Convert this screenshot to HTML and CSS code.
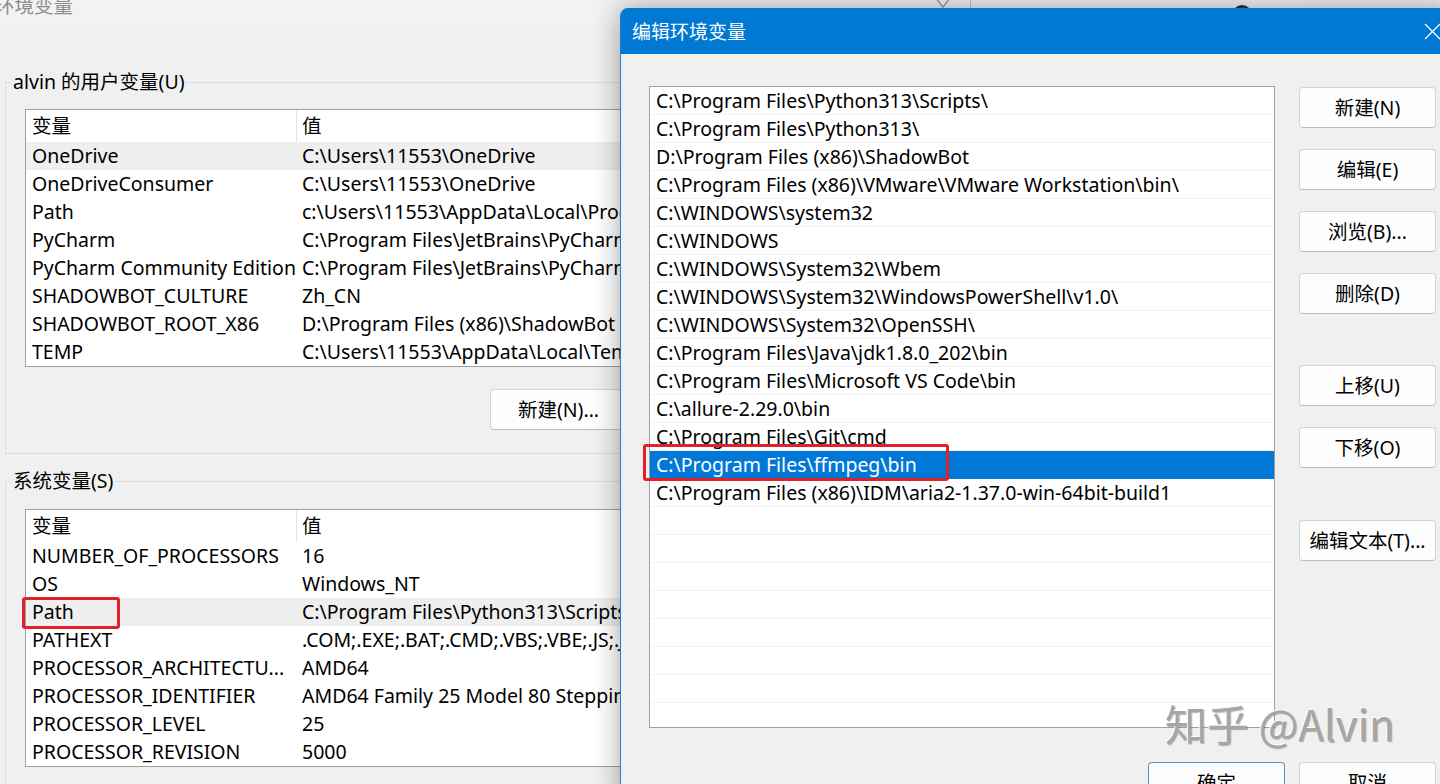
FILE: index.html
```html
<!DOCTYPE html>
<html lang="zh-CN">
<head>
<meta charset="utf-8">
<title>编辑环境变量</title>
<link rel="stylesheet" href="styles.css">
</head>
<body>
<div class="screen">
  <div class="bgwin">
    <div class="bgtitle">
      <span class="bgtitle-text">环境变量</span>
      <svg class="chev" width="18" height="10" viewBox="0 0 18 10"><polyline points="1,-3 9,7 17,-3" fill="none" stroke="#8a8a8a" stroke-width="1.2"/></svg>
      <span class="vline"></span>
      <span class="dot"></span>
    </div>

    <fieldset class="group g1">
      <legend>alvin 的用户变量(U)</legend>
      <div class="table">
        <div class="thead"><div class="c1">变量</div><div class="c2">值</div></div>
        <div class="row sel"><div class="c1">OneDrive</div><div class="c2">C:\Users\11553\OneDrive</div></div>
        <div class="row"><div class="c1">OneDriveConsumer</div><div class="c2">C:\Users\11553\OneDrive</div></div>
        <div class="row"><div class="c1">Path</div><div class="c2">c:\Users\11553\AppData\Local\Programs\Microsoft VS Code\bin</div></div>
        <div class="row"><div class="c1">PyCharm</div><div class="c2">C:\Program Files\JetBrains\PyCharm 2024.1\bin;</div></div>
        <div class="row"><div class="c1">PyCharm Community Edition</div><div class="c2">C:\Program Files\JetBrains\PyCharm Community Edition\bin;</div></div>
        <div class="row"><div class="c1">SHADOWBOT_CULTURE</div><div class="c2">Zh_CN</div></div>
        <div class="row"><div class="c1">SHADOWBOT_ROOT_X86</div><div class="c2">D:\Program Files (x86)\ShadowBot</div></div>
        <div class="row"><div class="c1">TEMP</div><div class="c2">C:\Users\11553\AppData\Local\Temp</div></div>
      </div>
      <div class="btnrow"><button class="btn">新建(N)...</button></div>
    </fieldset>

    <fieldset class="group g2">
      <legend>系统变量(S)</legend>
      <div class="table">
        <div class="thead"><div class="c1">变量</div><div class="c2">值</div></div>
        <div class="row"><div class="c1">NUMBER_OF_PROCESSORS</div><div class="c2">16</div></div>
        <div class="row"><div class="c1">OS</div><div class="c2">Windows_NT</div></div>
        <div class="row sel hl"><div class="c1">Path</div><div class="c2">C:\Program Files\Python313\Scripts\;C:\Program Files\Python313\</div><span class="mark mark-path"></span></div>
        <div class="row"><div class="c1">PATHEXT</div><div class="c2">.COM;.EXE;.BAT;.CMD;.VBS;.VBE;.JS;.JSE;.WSF;.WSH;.MSC</div></div>
        <div class="row"><div class="c1">PROCESSOR_ARCHITECTU...</div><div class="c2">AMD64</div></div>
        <div class="row"><div class="c1">PROCESSOR_IDENTIFIER</div><div class="c2">AMD64 Family 25 Model 80 Stepping 0, AuthenticAMD</div></div>
        <div class="row"><div class="c1">PROCESSOR_LEVEL</div><div class="c2">25</div></div>
        <div class="row"><div class="c1">PROCESSOR_REVISION</div><div class="c2">5000</div></div>
      </div>
    </fieldset>
  </div>

  <div class="dialog">
    <div class="dtitle">
      <span>编辑环境变量</span>
      <span class="close"><svg width="17" height="17" viewBox="0 0 17 17"><path d="M1 1 L16 16 M16 1 L1 16" stroke="#fff" stroke-width="1.3" fill="none"/></svg></span>
    </div>
    <div class="dbody">
      <div class="listwrap">
        <div class="list">
          <div class="item">C:\Program Files\Python313\Scripts\</div>
          <div class="item">C:\Program Files\Python313\</div>
          <div class="item">D:\Program Files (x86)\ShadowBot</div>
          <div class="item">C:\Program Files (x86)\VMware\VMware Workstation\bin\</div>
          <div class="item">C:\WINDOWS\system32</div>
          <div class="item">C:\WINDOWS</div>
          <div class="item">C:\WINDOWS\System32\Wbem</div>
          <div class="item">C:\WINDOWS\System32\WindowsPowerShell\v1.0\</div>
          <div class="item">C:\WINDOWS\System32\OpenSSH\</div>
          <div class="item">C:\Program Files\Java\jdk1.8.0_202\bin</div>
          <div class="item">C:\Program Files\Microsoft VS Code\bin</div>
          <div class="item">C:\allure-2.29.0\bin</div>
          <div class="item">C:\Program Files\Git\cmd</div>
          <div class="item sel">C:\Program Files\ffmpeg\bin</div>
          <div class="item">C:\Program Files (x86)\IDM\aria2-1.37.0-win-64bit-build1</div>
          <div class="item"></div>
          <div class="item"></div>
          <div class="item"></div>
          <div class="item"></div>
          <div class="item"></div>
          <div class="item"></div>
          <div class="item"></div>
          <div class="item"></div>
        </div>
        <span class="mark mark-ff"></span>
      </div>
      <div class="side">
        <button class="btn">新建(N)</button>
        <button class="btn gap">编辑(E)</button>
        <button class="btn gap">浏览(B)...</button>
        <button class="btn gap">删除(D)</button>
        <button class="btn gap-lg">上移(U)</button>
        <button class="btn gap">下移(O)</button>
        <button class="btn gap-xl">编辑文本(T)...</button>
      </div>
      <div class="dbtns">
        <button class="btn primary">确定</button>
        <button class="btn">取消</button>
      </div>
    </div>
  </div>

  <div class="watermark">知乎 @Alvin</div>
</div>
</body>
</html>
```

FILE: styles.css
```css
* { box-sizing: border-box; }
html, body { margin: 0; padding: 0; }
body {
  width: 1440px;
  height: 784px;
  overflow: hidden;
  background: #f0f0f0;
  font-family: "Noto Sans", "Noto Sans CJK SC", sans-serif;
  font-size: 19.5px;
  color: #000;
}
.screen { position: relative; width: 1440px; height: 784px; overflow: hidden; }

/* background window */
.bgwin { width: 1300px; }
.bgtitle { height: 30px; display: flex; align-items: flex-start; background: #f2f2f2; }
.bgtitle-text { margin-left: -5px; margin-top: -6px; line-height: 24px; color: #8c8c8c; white-space: nowrap; }
.chev { margin-left: 861px; flex: none; }
.vline { margin-left: 18px; width: 1px; height: 16px; background: #c6c6c6; flex: none; }
.dot { margin-left: 261px; margin-top: 5px; width: 20px; height: 20px; border-radius: 50%; background: #333; flex: none; }

.group {
  margin: 0 0 0 5px;
  padding: 0;
  border: 1px solid #dcdcdc;
  min-inline-size: 0;
  width: 650px;
}
.group legend { margin-left: 5px; padding: 0 2px; line-height: 26px; }
.g1 { margin-top: 39px; padding-bottom: 23px; }
.g2 { margin-top: 14px; padding-bottom: 20px; }

.table { margin: 14px 0 0 19px; width: 630px; border: 1px solid #a0a0a0; background: #fff; }
.g2 .table { margin-top: 15px; }
.thead { display: flex; height: 32px; line-height: 32px; }
.row { display: flex; height: 28px; line-height: 28px; }
.c1 { flex: none; width: 271px; padding-left: 6px; white-space: nowrap; overflow: hidden; }
.c2 { flex: 1; min-width: 0; padding-left: 5px; white-space: nowrap; overflow: hidden; }
.thead .c1 { border-right: 1px solid #e5e5e5; }
.row.sel { background: #efefef; }
.row.hl { position: relative; }

.btnrow { display: flex; margin: 22px 0 0 484px; }

.btn {
  font: inherit;
  color: #000;
  width: 137px;
  height: 41px;
  padding: 0;
  background: #fdfdfd;
  border: 1px solid #d3d3d3;
  border-bottom-color: #bebebe;
  border-radius: 4px;
  line-height: 38px;
  white-space: nowrap;
}
.btn.primary { border-color: #5a90c2; border-bottom-color: #4a7fb2; }

.mark {
  position: absolute;
  border: 3px solid #e1202a;
  border-radius: 3px;
  pointer-events: none;
}
.mark-path { left: -4px; top: -1px; width: 98px; height: 32px; }

/* dialog */
.dialog {
  position: absolute;
  left: 620px;
  top: 8px;
  width: 836px;
  height: 800px;
  background: #f0f0f0;
  border: 1px solid #1a7fd4;
  border-top: 0;
  border-radius: 8px 8px 0 0;
  box-shadow: 0 0 28px rgba(0, 0, 0, 0.36);
  overflow: hidden;
}
.dtitle {
  height: 46px;
  background: #0078d4;
  color: #fff;
  font-size: 19px;
  display: flex;
  align-items: center;
  padding-left: 11px;
}
.close { margin-left: auto; width: 46px; height: 46px; display: flex; align-items: center; justify-content: center; }

.dbody {
  display: grid;
  grid-template-columns: 626px 137px;
  column-gap: 24px;
  padding: 32px 0 0 28px;
}
.listwrap { position: relative; }
.list { height: 642px; border: 1px solid #a0a0a0; background: #fff; overflow: hidden; }
.item {
  height: 28px;
  line-height: 27px;
  padding-left: 6px;
  border-bottom: 1px solid #f3f3f3;
  white-space: nowrap;
}
.item.sel { background: #0078d7; color: #fff; border-bottom-color: #0078d7; }
.mark-ff { left: -6px; top: 358px; width: 306px; height: 37px; }

.side { display: flex; flex-direction: column; padding-top: 1px; }
.side .gap { margin-top: 21px; }
.side .gap-lg { margin-top: 51px; }
.side .gap-xl { margin-top: 52px; }

.dbtns { grid-column: 1 / -1; display: flex; justify-content: flex-end; gap: 14px; margin-top: 34px; }

.watermark {
  position: absolute;
  left: 1165px;
  top: 697px;
  font-family: "Noto Sans CJK SC", sans-serif;
  font-size: 42px;
  line-height: 52px;
  color: #a6a6a6;
  white-space: nowrap;
  text-shadow: -1px -1px 0 rgba(255, 255, 255, 0.95), 1px 1px 1px rgba(0, 0, 0, 0.3);
}
```
